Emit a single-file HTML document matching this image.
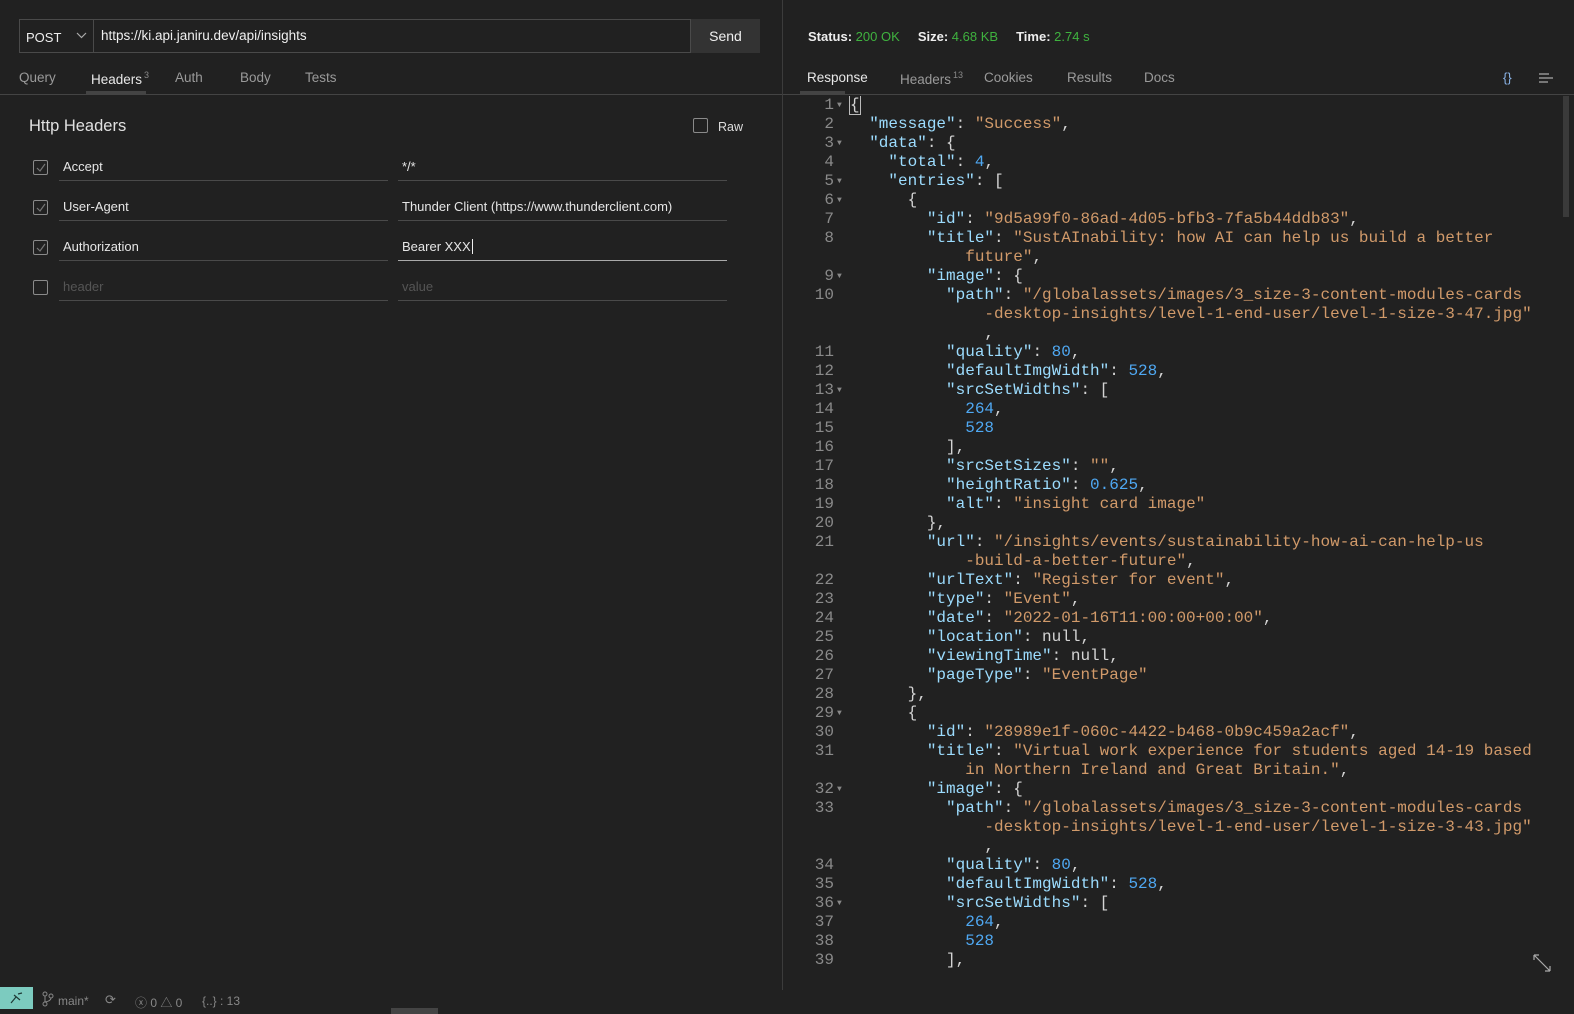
<!DOCTYPE html>
<html><head><meta charset="utf-8">
<style>
*{margin:0;padding:0;box-sizing:border-box}
body{width:1574px;height:1014px;background:#212121;color:#ccc;font-family:"Liberation Sans",sans-serif;position:relative;overflow:hidden;font-size:13px}
.a{position:absolute}
.tab{position:absolute;top:70px;font-size:13.5px;color:#9a9a9a}
.tab.on{color:#e8e8e8}
sup{font-size:9px;color:#888;vertical-align:6px;margin-left:2px}
.cb{position:absolute;width:15px;height:15px;border:1px solid #8a8a8a;border-radius:2px}
.cb svg{position:absolute;left:1px;top:1px}
.fl{position:absolute;height:1px;background:#4a4a4a}
.ft{position:absolute;font-size:13px;color:#e6e6e6}
#code{position:absolute;left:792px;top:96px;width:766px;height:872px;overflow:hidden;font-family:"Liberation Mono",monospace;font-size:16px}
.r{height:19px;line-height:19px;white-space:pre;position:relative;color:#d4d4d4}
.ln{position:absolute;left:0;width:42px;text-align:right;color:#8a8a8a}
.fd{position:absolute;left:45px;top:0;font-size:8px;color:#888}
.c{position:absolute;left:58px}
.k{color:#9cdcfe}.s{color:#d19a6a}.n{color:#4fa8f2}
</style></head><body>
<div class="a" style="left:19px;top:19px;width:672px;height:34px;border:1px solid #4a4a4a"></div>
<div class="a" style="left:93px;top:19px;width:1px;height:34px;background:#4a4a4a"></div>
<div class="a" style="left:26px;top:30px;font-size:13px;color:#eee">POST</div>
<svg class="a" style="left:76px;top:32px" width="11" height="7"><path d="M1 1 L5.5 5.5 L10 1" stroke="#aaa" fill="none" stroke-width="1.2"/></svg>
<div class="a" style="left:101px;top:28px;font-size:13.5px;color:#f0f0f0">https://ki.api.janiru.dev/api/insights</div>
<div class="a" style="left:691px;top:19px;width:69px;height:34px;background:#333;color:#f0f0f0;font-size:14px;text-align:center;line-height:34px">Send</div>
<div class="tab" style="left:19px">Query</div>
<div class="tab on" style="left:91px">Headers<sup>3</sup></div>
<div class="a" style="left:86px;top:91px;width:60px;height:3px;background:#444"></div>
<div class="tab" style="left:175px">Auth</div>
<div class="tab" style="left:240px">Body</div>
<div class="tab" style="left:305px">Tests</div>
<div class="a" style="left:0;top:94px;width:782px;height:1px;background:#444"></div>
<div class="a" style="left:782px;top:0;width:1px;height:990px;background:#3c3c3c"></div>
<div class="a" style="left:29px;top:117px;font-size:16.5px;color:#e0e0e0">Http Headers</div>
<div class="cb" style="left:693px;top:118px"></div>
<div class="a" style="left:718px;top:120px;font-size:12.5px;color:#ddd">Raw</div>

<div class="cb" style="left:33px;top:160px"><svg width="12" height="12"><path d="M2 6 L5 9 L10 2" stroke="#777" fill="none" stroke-width="1.2"/></svg></div>
<div class="ft" style="left:63px;top:159px">Accept</div>
<div class="fl" style="left:59px;top:180px;width:329px"></div>
<div class="ft" style="left:402px;top:159px">*/*</div>
<div class="fl" style="left:398px;top:180px;width:329px"></div>

<div class="cb" style="left:33px;top:200px"><svg width="12" height="12"><path d="M2 6 L5 9 L10 2" stroke="#777" fill="none" stroke-width="1.2"/></svg></div>
<div class="ft" style="left:63px;top:199px">User-Agent</div>
<div class="fl" style="left:59px;top:220px;width:329px"></div>
<div class="ft" style="left:402px;top:199px">Thunder Client (https://www.thunderclient.com)</div>
<div class="fl" style="left:398px;top:220px;width:329px"></div>

<div class="cb" style="left:33px;top:240px"><svg width="12" height="12"><path d="M2 6 L5 9 L10 2" stroke="#777" fill="none" stroke-width="1.2"/></svg></div>
<div class="ft" style="left:63px;top:239px">Authorization</div>
<div class="fl" style="left:59px;top:260px;width:329px"></div>
<div class="ft" style="left:402px;top:239px">Bearer XXX<span style="border-left:1px solid #eee;margin-left:1px"></span></div>
<div class="fl" style="left:398px;top:260px;width:329px;background:#aaa"></div>

<div class="cb" style="left:33px;top:280px"></div>
<div class="ft" style="left:63px;top:279px;color:#555">header</div>
<div class="fl" style="left:59px;top:300px;width:329px"></div>
<div class="ft" style="left:402px;top:279px;color:#555">value</div>
<div class="fl" style="left:398px;top:300px;width:329px"></div>

<div class="a" style="left:808px;top:29px;font-size:13px;color:#eee;font-weight:bold;white-space:pre">Status: <span style="color:#3fb23f;font-weight:normal">200 OK</span>     Size: <span style="color:#3fb23f;font-weight:normal">4.68 KB</span>     Time: <span style="color:#3fb23f;font-weight:normal">2.74 s</span></div>
<div class="tab on" style="left:807px">Response</div>
<div class="a" style="left:800px;top:91px;width:45px;height:3px;background:#444"></div>
<div class="tab" style="left:900px">Headers<sup>13</sup></div>
<div class="tab" style="left:984px">Cookies</div>
<div class="tab" style="left:1067px">Results</div>
<div class="tab" style="left:1144px">Docs</div>
<div class="a" style="left:1503px;top:70px;font-size:13px;color:#8ab4e8">{}</div>
<svg class="a" style="left:1539px;top:73px" width="15" height="11"><path d="M0 1H10M0 5H14M0 9H9" stroke="#aaa" stroke-width="1.2"/></svg>
<div class="a" style="left:783px;top:94px;width:791px;height:1px;background:#444"></div>
<div class="a" style="left:1563px;top:96px;width:6px;height:121px;background:#3a3a3a"></div>

<div id="code">
<div class="r"><span class="ln">1</span><span class="fd">▼</span><span class="c"><span style="outline:1px solid #bbb">{</span></span></div>
<div class="r"><span class="ln">2</span><span class="c">  <span class="k">"message"</span>: <span class="s">"Success"</span>,</span></div>
<div class="r"><span class="ln">3</span><span class="fd">▼</span><span class="c">  <span class="k">"data"</span>: {</span></div>
<div class="r"><span class="ln">4</span><span class="c">    <span class="k">"total"</span>: <span class="n">4</span>,</span></div>
<div class="r"><span class="ln">5</span><span class="fd">▼</span><span class="c">    <span class="k">"entries"</span>: [</span></div>
<div class="r"><span class="ln">6</span><span class="fd">▼</span><span class="c">      {</span></div>
<div class="r"><span class="ln">7</span><span class="c">        <span class="k">"id"</span>: <span class="s">"9d5a99f0-86ad-4d05-bfb3-7fa5b44ddb83"</span>,</span></div>
<div class="r"><span class="ln">8</span><span class="c">        <span class="k">"title"</span>: <span class="s">"SustAInability: how AI can help us build a better</span></span></div>
<div class="r"><span class="c">            <span class="s">future"</span>,</span></div>
<div class="r"><span class="ln">9</span><span class="fd">▼</span><span class="c">        <span class="k">"image"</span>: {</span></div>
<div class="r"><span class="ln">10</span><span class="c">          <span class="k">"path"</span>: <span class="s">"/globalassets/images/3_size-3-content-modules-cards</span></span></div>
<div class="r"><span class="c">              <span class="s">-desktop-insights/level-1-end-user/level-1-size-3-47.jpg"</span></span></div>
<div class="r"><span class="c">              ,</span></div>
<div class="r"><span class="ln">11</span><span class="c">          <span class="k">"quality"</span>: <span class="n">80</span>,</span></div>
<div class="r"><span class="ln">12</span><span class="c">          <span class="k">"defaultImgWidth"</span>: <span class="n">528</span>,</span></div>
<div class="r"><span class="ln">13</span><span class="fd">▼</span><span class="c">          <span class="k">"srcSetWidths"</span>: [</span></div>
<div class="r"><span class="ln">14</span><span class="c">            <span class="n">264</span>,</span></div>
<div class="r"><span class="ln">15</span><span class="c">            <span class="n">528</span></span></div>
<div class="r"><span class="ln">16</span><span class="c">          ],</span></div>
<div class="r"><span class="ln">17</span><span class="c">          <span class="k">"srcSetSizes"</span>: <span class="s">""</span>,</span></div>
<div class="r"><span class="ln">18</span><span class="c">          <span class="k">"heightRatio"</span>: <span class="n">0.625</span>,</span></div>
<div class="r"><span class="ln">19</span><span class="c">          <span class="k">"alt"</span>: <span class="s">"insight card image"</span></span></div>
<div class="r"><span class="ln">20</span><span class="c">        },</span></div>
<div class="r"><span class="ln">21</span><span class="c">        <span class="k">"url"</span>: <span class="s">"/insights/events/sustainability-how-ai-can-help-us</span></span></div>
<div class="r"><span class="c">            <span class="s">-build-a-better-future"</span>,</span></div>
<div class="r"><span class="ln">22</span><span class="c">        <span class="k">"urlText"</span>: <span class="s">"Register for event"</span>,</span></div>
<div class="r"><span class="ln">23</span><span class="c">        <span class="k">"type"</span>: <span class="s">"Event"</span>,</span></div>
<div class="r"><span class="ln">24</span><span class="c">        <span class="k">"date"</span>: <span class="s">"2022-01-16T11:00:00+00:00"</span>,</span></div>
<div class="r"><span class="ln">25</span><span class="c">        <span class="k">"location"</span>: null,</span></div>
<div class="r"><span class="ln">26</span><span class="c">        <span class="k">"viewingTime"</span>: null,</span></div>
<div class="r"><span class="ln">27</span><span class="c">        <span class="k">"pageType"</span>: <span class="s">"EventPage"</span></span></div>
<div class="r"><span class="ln">28</span><span class="c">      },</span></div>
<div class="r"><span class="ln">29</span><span class="fd">▼</span><span class="c">      {</span></div>
<div class="r"><span class="ln">30</span><span class="c">        <span class="k">"id"</span>: <span class="s">"28989e1f-060c-4422-b468-0b9c459a2acf"</span>,</span></div>
<div class="r"><span class="ln">31</span><span class="c">        <span class="k">"title"</span>: <span class="s">"Virtual work experience for students aged 14-19 based</span></span></div>
<div class="r"><span class="c">            <span class="s">in Northern Ireland and Great Britain."</span>,</span></div>
<div class="r"><span class="ln">32</span><span class="fd">▼</span><span class="c">        <span class="k">"image"</span>: {</span></div>
<div class="r"><span class="ln">33</span><span class="c">          <span class="k">"path"</span>: <span class="s">"/globalassets/images/3_size-3-content-modules-cards</span></span></div>
<div class="r"><span class="c">              <span class="s">-desktop-insights/level-1-end-user/level-1-size-3-43.jpg"</span></span></div>
<div class="r"><span class="c">              ,</span></div>
<div class="r"><span class="ln">34</span><span class="c">          <span class="k">"quality"</span>: <span class="n">80</span>,</span></div>
<div class="r"><span class="ln">35</span><span class="c">          <span class="k">"defaultImgWidth"</span>: <span class="n">528</span>,</span></div>
<div class="r"><span class="ln">36</span><span class="fd">▼</span><span class="c">          <span class="k">"srcSetWidths"</span>: [</span></div>
<div class="r"><span class="ln">37</span><span class="c">            <span class="n">264</span>,</span></div>
<div class="r"><span class="ln">38</span><span class="c">            <span class="n">528</span></span></div>
<div class="r"><span class="ln">39</span><span class="c">          ],</span></div>
<div class="r"><span class="ln">40</span><span class="c">          <span class="k">"srcSetSizes"</span>: <span class="s">""</span>,</span></div>
</div>
<svg class="a" style="left:1532px;top:953px" width="20" height="20"><path d="M2 2L18 18M2 2V7M2 2H7M18 18V13M18 18H13" stroke="#aaa" stroke-width="1.2" fill="none"/></svg>

<div class="a" style="left:0;top:987px;width:33px;height:22px;background:#7ccbbf"></div>
<svg class="a" style="left:9px;top:991px" width="14" height="14"><path d="M2 12L7 6M5 4L11 9M9 3L13 2" stroke="#1e3a36" stroke-width="1.2" fill="none"/></svg>
<svg class="a" style="left:42px;top:991px" width="12" height="16"><circle cx="3" cy="3" r="2" stroke="#888" fill="none"/><circle cx="3" cy="13" r="2" stroke="#888" fill="none"/><circle cx="9" cy="5" r="2" stroke="#888" fill="none"/><path d="M3 5V11M9 7Q9 10 3 11" stroke="#888" fill="none"/></svg>
<div class="a" style="left:58px;top:994px;font-size:12px;color:#888">main*</div>
<div class="a" style="left:105px;top:992px;font-size:13px;color:#888">⟳</div>
<div class="a" style="left:135px;top:994px;font-size:12px;color:#888">ⓧ 0 △ 0</div>
<div class="a" style="left:202px;top:994px;font-size:12px;color:#888">{..} : 13</div>
<div class="a" style="left:391px;top:1008px;width:47px;height:6px;background:#444"></div>
</body></html>
